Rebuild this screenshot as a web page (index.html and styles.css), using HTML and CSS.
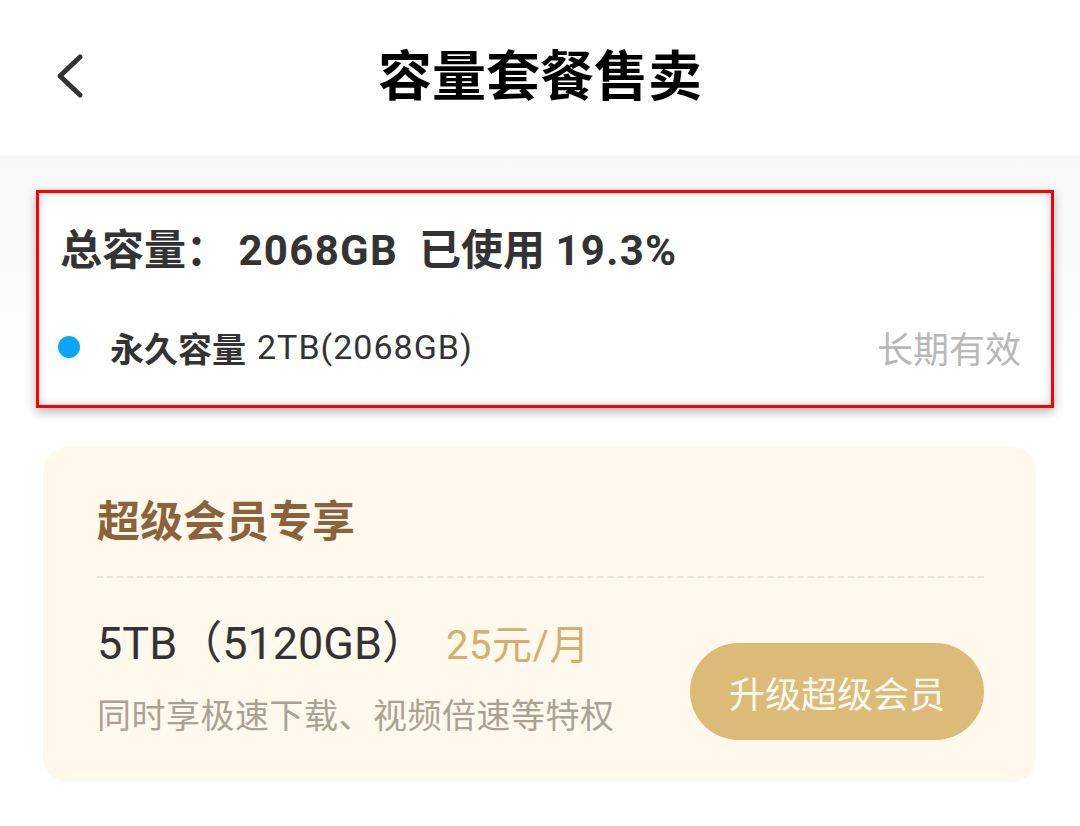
FILE: index.html
```html
<!DOCTYPE html>
<html lang="zh-CN">
<head>
<meta charset="utf-8">
<title>容量套餐售卖</title>
<link rel="stylesheet" href="styles.css">
</head>
<body>
<div class="page">
  <header class="topbar">
    <div class="back">
      <svg width="40" height="48" viewBox="0 0 40 48" aria-hidden="true">
        <polyline points="30,4 10,23 30,42" fill="none" stroke="#333" stroke-width="5" stroke-linecap="round" stroke-linejoin="round"/>
      </svg>
    </div>
    <h1 class="title">容量套餐售卖</h1>
    <div></div>
  </header>

  <main class="content">
    <section class="summary">
      <div class="summary-line">总容量：&nbsp;<span class="num">2068GB</span>&nbsp;&nbsp;已使用&nbsp;<span class="num">19.3%</span></div>
      <div class="cap-row">
        <div class="cap-left">
          <span class="dot"></span>
          <span class="cap-name">永久容量</span>
          <span class="cap-size">2TB(2068GB)</span>
        </div>
        <span class="cap-valid">长期有效</span>
      </div>
    </section>

    <section class="vip">
      <h2 class="vip-title">超级会员专享</h2>
      <div class="vip-divider"></div>
      <div class="vip-row">
        <div class="vip-info">
          <div class="vip-main">5TB（5120GB）<span class="vip-price">25元/月</span></div>
          <div class="vip-sub">同时享极速下载、视频倍速等特权</div>
        </div>
        <button class="vip-btn">升级超级会员</button>
      </div>
    </section>
  </main>
</div>
</body>
</html>
```

FILE: styles.css
```css
* {
  box-sizing: border-box;
}

html, body {
  margin: 0;
  padding: 0;
  background: #ffffff;
}

body {
  width: 1080px;
  height: 826px;
  overflow: hidden;
  font-family: Roboto, "Noto Sans CJK SC", sans-serif;
  color: #333333;
}

.page {
  width: 1080px;
  height: 826px;
  display: flex;
  flex-direction: column;
}

.topbar {
  height: 155px;
  display: grid;
  grid-template-columns: 1fr auto 1fr;
  align-items: center;
  background: #ffffff;
  padding-bottom: 10px;
}

.back {
  padding-left: 50px;
  display: flex;
  align-items: center;
  padding-top: 8px;
}

.back svg {
  display: block;
}

.title {
  margin: 0;
  font-family: "Noto Sans CJK SC", sans-serif;
  font-size: 54px;
  font-weight: 700;
  line-height: 60px;
  color: #000000;
}

.content {
  flex: 1;
  background: linear-gradient(to bottom, #f8f8f8 0px, #fcfcfc 120px, #ffffff 280px);
  padding-top: 35px;
}

.summary {
  margin: 0 26px 0 36px;
  height: 218px;
  border: 3px solid #ff0000;
  background: #ffffff;
  box-shadow: 0 4px 10px rgba(0, 0, 0, 0.28), inset 0 0 10px rgba(0, 0, 0, 0.18);
  padding: 32px 30px 0 21px;
  display: flex;
  flex-direction: column;
}

.summary-line {
  font-size: 42px;
  font-weight: 700;
  line-height: 52px;
  color: #333333;
  white-space: nowrap;
}

.summary-line .num {
  letter-spacing: 1.3px;
}

.cap-row {
  margin-top: 48px;
  display: flex;
  align-items: center;
  justify-content: space-between;
  height: 44px;
}

.cap-left {
  display: flex;
  align-items: center;
}

.dot {
  width: 22px;
  height: 22px;
  border-radius: 50%;
  background: #0aa6f8;
  margin-left: -2px;
  margin-right: 30px;
}

.cap-name {
  font-size: 34px;
  font-weight: 700;
  color: #333333;
  margin-right: 11px;
}

.cap-size {
  font-size: 34px;
  font-weight: 400;
  color: #333333;
  letter-spacing: 1px;
}

.cap-valid {
  font-size: 36px;
  color: #b8b8b8;
}

.vip {
  margin: 39px 44px 0 43px;
  height: 335px;
  background: #fef9ec;
  border-radius: 24px;
  padding: 50px 52px 0 54px;
}

.vip-title {
  margin: 0;
  font-size: 43px;
  font-weight: 700;
  line-height: 50px;
  color: #8b6239;
}

.vip-divider {
  margin-top: 29px;
  border-top: 2px dashed #ebe3d4;
}

.vip-row {
  margin-top: 38px;
  display: flex;
  align-items: flex-end;
  justify-content: space-between;
}

.vip-info {
  display: flex;
  flex-direction: column;
  gap: 20px;
}

.vip-main {
  font-size: 45px;
  line-height: 56px;
  color: #333333;
  white-space: nowrap;
}

.vip-price {
  margin-left: 19px;
  color: #d4ae6c;
  font-size: 40px;
  letter-spacing: 0.5px;
}

.vip-sub {
  font-size: 34px;
  line-height: 44px;
  color: #aca293;
  letter-spacing: 0.5px;
  white-space: nowrap;
}

.vip-btn {
  width: 294px;
  height: 97px;
  border: none;
  border-radius: 49px;
  background: #dcbb79;
  color: #fffaf0;
  font-family: "Noto Sans CJK SC", sans-serif;
  font-size: 36px;
  font-weight: 400;
  margin-bottom: -2px;
  padding: 0;
}
```
